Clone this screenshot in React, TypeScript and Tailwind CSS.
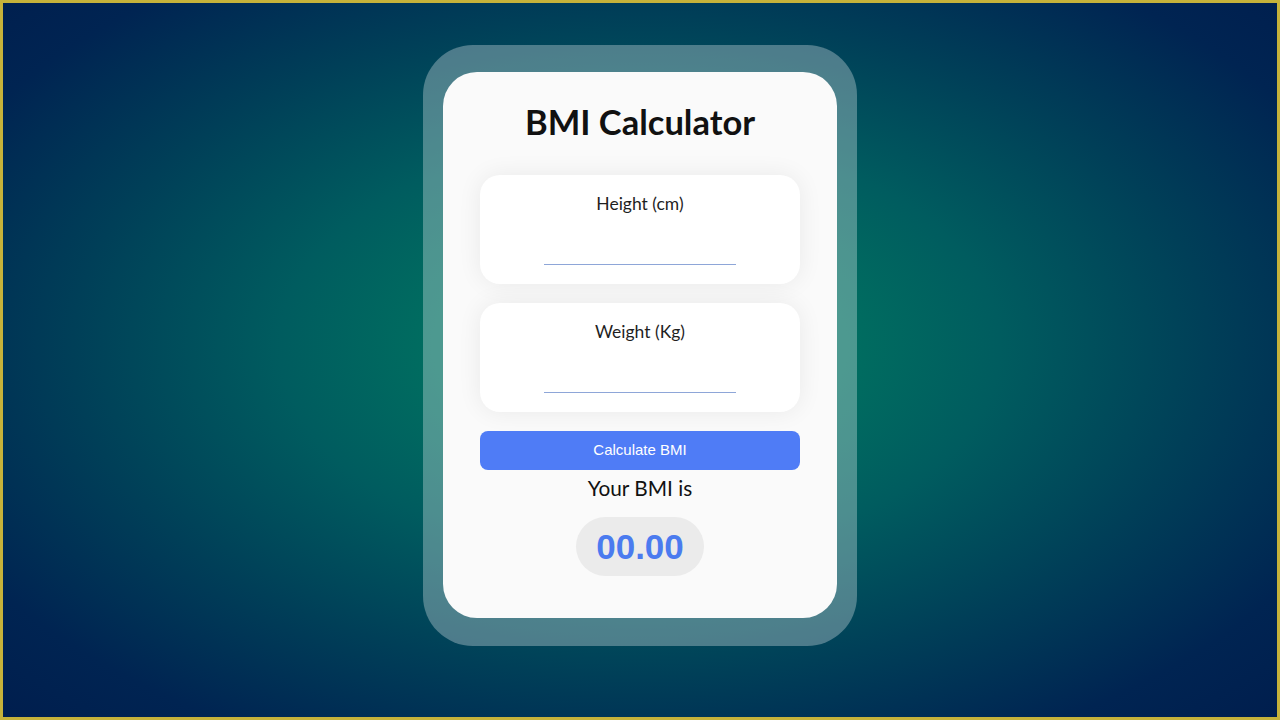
import { useState } from 'react'

function Field({ label }: { label: string }) {
  return (
    <div className="flex h-[109px] w-[320px] flex-col items-center rounded-[20px] bg-white pt-[17px] shadow-[0_0_24px_rgba(0,0,0,0.07)]">
      <label className="text-[17.5px] leading-[24px] text-[#1f1f1f]">{label}</label>
      <input
        type="text"
        className="mt-[19px] h-[30px] w-[192px] border-b border-[#8ea6d8] bg-transparent text-center text-[16px] outline-none"
      />
    </div>
  )
}

export default function App() {
  const [bmi] = useState('00.00')

  return (
    <div
      className="flex h-[720px] w-full items-center justify-center border-[3px] border-[#c6b23a] pb-[29px] font-['Lato',sans-serif]"
      style={{
        background:
          'radial-gradient(ellipse at 50% 48%, #00875f 0%, #006e60 22%, #005c5f 40%, #003f58 63%, #002452 85%, #001e4e 100%)',
      }}
    >
      <div className="rounded-[50px] bg-white/30 px-[20px] pt-[27px] pb-[28px]">
        <div className="flex h-[546px] w-[394px] flex-col items-center rounded-[34px] bg-[#fafafa] pt-[30px]">
          <h1 className="text-[34.5px] leading-[40px] font-bold text-[#111]">BMI Calculator</h1>

          <div className="mt-[33px] flex flex-col items-center gap-[19px]">
            <Field label="Height (cm)" />
            <Field label="Weight (Kg)" />
            <button className="h-[39px] w-[320px] rounded-[8px] bg-[#4f7cf6] font-['Liberation_Sans',sans-serif] text-[15px] text-white">
              Calculate BMI
            </button>
          </div>

          <p className="mt-[4px] text-[20.8px] leading-[28px] text-[#111]">Your BMI is</p>

          <div className="mt-[15px] flex h-[59px] w-[128px] items-center justify-center rounded-full bg-[#ebebeb]">
            <span className="font-['Liberation_Sans',sans-serif] text-[35px] leading-[40px] font-bold text-[#4b7bef]">
              {bmi}
            </span>
          </div>
        </div>
      </div>
    </div>
  )
}
